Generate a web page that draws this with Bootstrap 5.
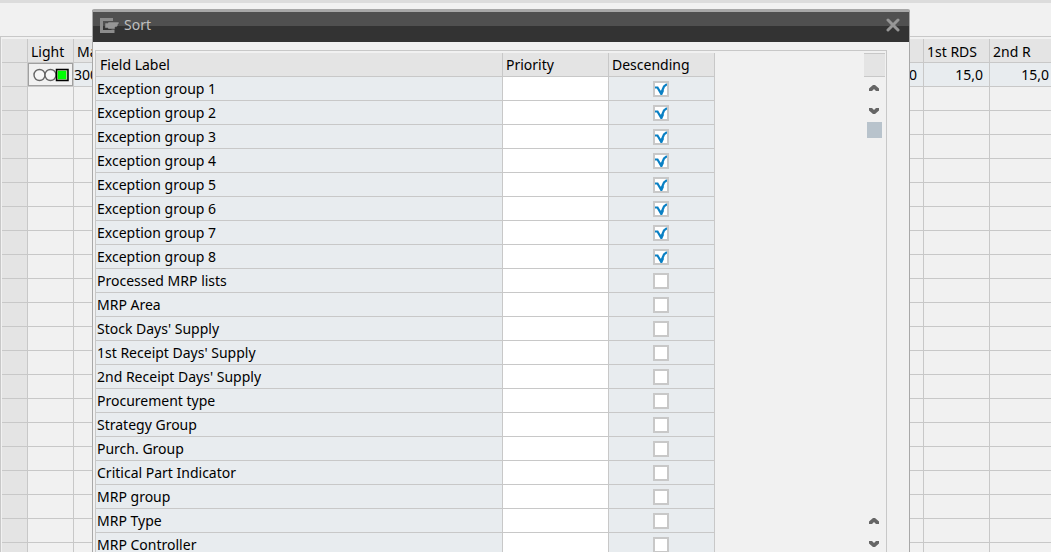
<!DOCTYPE html>
<html lang="en">
<head>
<meta charset="utf-8">
<meta name="viewport" content="width=device-width, initial-scale=1">
<title>Sort</title>
<link href="https://cdn.jsdelivr.net/npm/bootstrap@5.3.0/dist/css/bootstrap.min.css" rel="stylesheet">
<style>
  :root { --line: #c8c8c8; --head: #e4e4e4; --cell: #e8ecef; --page: #f1f1f1; }
  body { background: var(--page); color: #000; font: 14px/20px "Noto Sans", Tahoma, sans-serif; }
  .top-strip { height: 3px; background: #dcdcdc; }
  .result-list { margin-top: 33px; margin-right: -5px; padding-top: 2px; padding-left: 1px; border-top: 1px solid var(--line); border-left: 1px solid var(--line); }
  .sap-grid { table-layout: fixed; border-collapse: separate; border-spacing: 0; }
  .sap-grid th, .sap-grid td { height: 24px; padding: 0 2px; border: 0 solid var(--line); border-width: 0 1px 1px 0; font-weight: 400; white-space: nowrap; overflow: hidden; vertical-align: middle; }
  .sap-grid thead th { background: var(--head); padding: 2px 3px 0; }
  .sap-grid .current td { background: var(--cell); }
  .sap-grid tr td.row-handle { background: var(--head); }
  .w-handle { width: 26px; } .w-light { width: 46px; } .w-rds { width: 66px; }
  .result-list .num { padding-right: 6px; }
  .light-btn { display: flex; align-items: center; justify-content: center; width: 100%; height: 23px; padding: 0; background: var(--page); border: 1px solid #a0a0a0; }
  .sort-window { left: 92px; right: 141px; top: 9px; bottom: 0; background: var(--page); border: solid #a8a8a8; border-width: 3px 1px 0; border-radius: 2px 2px 0 0; }
  .title-bar { height: 30px; flex: none; padding: 0 9px 4px 7px; background: linear-gradient(#505050 14px, #333 14px); color: #c0c0c0; }
  .title-bar h1 { font-size: 14px; line-height: 20px; }
  .sort-panel { margin: 8px 22px 0 2px; border: solid var(--line); border-width: 1px 1px 0; padding: 2px 1px 0 0; }
  .sort-area td { background: var(--cell); }
  .sort-area td.entry { background: #fff; padding: 0; }
  .sort-area tbody th { background: var(--cell); padding: 0 1px; }
  .sort-area thead th { padding: 1px 4px 0; }
  .sort-area thead .tight { padding-left: 3px; }
  .sort-area td.desc-cell { padding: 0 3px 0 1px; }
  .w-label { width: 407px; } .w-entry { width: 106px; }
  .entry input { height: 23px; min-height: 0; border: 0; border-radius: 0; padding: 0 3px; font-size: 14px; }
  .desc-check.form-check-input { width: 16px; height: 16px; margin: 1px auto 0; border: 2px solid var(--line); border-radius: 0; background-color: #fff; float: none; display: block; }
  .desc-check.form-check-input:checked { background-color: #fff; border-color: var(--line); background-size: 12px 12px; background-image: url("data:image/svg+xml,%3Csvg xmlns='http://www.w3.org/2000/svg' viewBox='0 0 12 12'%3E%3Cpath d='M0 4.5H2.5L6 10.5L9 3.5L12 1M5 8.5H7.5L6 12' fill='none' stroke='%230a80c4' stroke-width='2.2'/%3E%3C/svg%3E"); }
  .scroll-rail { width: 21px; flex: none; }
  .rail-head { height: 24px; background: var(--head); border: solid var(--line); border-width: 1px 0; }
  .rail-btn { display: flex; align-items: center; justify-content: center; height: 23px; width: 100%; padding: 0 1px 2px 0; border: 0; background: none; }
  .rail-thumb { width: 15px; height: 16px; background: #b8c3cc; }
  .rail-track { height: 388px; margin-top: -1px; }
</style>
</head>
<body class="vh-100 overflow-hidden position-relative">
<div class="top-strip"></div>
<main class="result-list">
  <table class="sap-grid w-100" id="results">
    <colgroup><col class="w-handle"><col class="w-light"><col class="w-rds"><col><col class="w-rds"><col class="w-rds"></colgroup>
    <thead><tr><th></th><th>Light</th><th>Ma</th><th></th><th>1st RDS</th><th>2nd R</th></tr></thead>
    <tbody>
      <tr class="current"><td class="row-handle"></td>
        <td class="p-0"><button class="light-btn" type="button" aria-label="Green light">
          <svg width="36" height="14" viewBox="0 0 36 14"><g fill="#f6f6f6" stroke="#666" stroke-width="1.4"><circle cx="6.5" cy="7" r="5.5"/><circle cx="17.5" cy="7" r="5.5"/></g><path d="M23.5 1.5H35v11H23.5z" fill="#a8d890" stroke="#000" stroke-width="1.5"/><path d="M25 3h8v8h-8z" fill="#0f0"/></svg></button></td>
        <td class="px-0">300</td><td class="text-end num">0</td><td class="text-end num">15,0</td><td class="text-end num">15,0</td></tr>
    </tbody>
  </table>
</main>

<section class="sort-window position-absolute d-flex flex-column overflow-hidden" role="dialog" aria-labelledby="sortTitle">
  <header class="title-bar d-flex align-items-center">
    <svg width="20" height="15" viewBox="0 0 20 15" aria-hidden="true"><path d="M13 1.5H1.5v12H13v-2" fill="none" stroke="#8c8c8c" stroke-width="3"/><path d="M5 5h3V4h11v2h-1v2h-1v1h-2v2H8v-1H5z" fill="#969696" stroke="#444" stroke-width=".5"/></svg>
    <h1 class="mb-0 ms-1 fw-normal flex-grow-1" id="sortTitle">Sort</h1>
    <button class="btn p-0 border-0 d-flex" type="button" aria-label="Close"><svg width="14" height="14" viewBox="0 0 14 14"><path d="M2 2l10 10M12 2L2 12" stroke="#969696" stroke-width="3" stroke-linecap="round"/></svg></button>
  </header>
  <div class="sort-panel d-flex justify-content-between align-items-start">
    <div class="sort-area">
      <table class="sap-grid">
        <colgroup><col class="w-label"><col class="w-entry"><col class="w-entry"></colgroup>
        <thead><tr><th scope="col">Field Label</th><th scope="col" class="tight">Priority</th><th scope="col" class="tight">Descending</th></tr></thead>
        <tbody id="fields"></tbody>
      </table>
    </div>
    <div class="scroll-rail d-flex flex-column align-items-center">
      <div class="rail-head w-100"></div>
      <button class="rail-btn" type="button" aria-label="Top"><svg width="10" height="6" viewBox="0 0 10 6"><path d="M0 6V3.5L4 0h2l4 3.5V6H7L5 4 3 6z" fill="#666"/></svg></button>
      <button class="rail-btn" type="button" aria-label="Down"><svg width="10" height="6" viewBox="0 0 10 6"><path d="M0 0v2.5L4 6h2l4-3.5V0H7L5 2 3 0z" fill="#666"/></svg></button>
      <div class="rail-track"><div class="rail-thumb"></div></div>
      <button class="rail-btn" type="button" aria-label="Up"><svg width="10" height="6" viewBox="0 0 10 6"><path d="M0 6V3.5L4 0h2l4 3.5V6H7L5 4 3 6z" fill="#666"/></svg></button>
      <button class="rail-btn" type="button" aria-label="Bottom"><svg width="10" height="6" viewBox="0 0 10 6"><path d="M0 0v2.5L4 6h2l4-3.5V0H7L5 2 3 0z" fill="#666"/></svg></button>
    </div>
  </div>
</section>
<script src="https://cdn.jsdelivr.net/npm/bootstrap@5.3.0/dist/js/bootstrap.bundle.min.js"></script>
<script>
  const fields = [...Array.from({length: 8}, (_, i) => `Exception group ${i + 1}`),
    "Processed MRP lists", "MRP Area", "Stock Days' Supply", "1st Receipt Days' Supply", "2nd Receipt Days' Supply",
    "Procurement type", "Strategy Group", "Purch. Group", "Critical Part Indicator", "MRP group", "MRP Type", "MRP Controller"];
  document.getElementById("fields").innerHTML = fields.map((name, i) =>
    `<tr><th scope="row" id="f${i}">${name}</th><td class="entry"><input class="form-control" type="text" aria-labelledby="f${i}"></td>
     <td class="desc-cell"><input class="form-check-input desc-check" type="checkbox" aria-labelledby="f${i}"${i < 8 ? " checked" : ""}></td></tr>`).join("");
  // Empty rows below the single result
  document.querySelector("#results tbody").insertAdjacentHTML("beforeend",
    `<tr><td class="row-handle"></td>${"<td></td>".repeat(5)}</tr>`.repeat(20));
</script>
</body>
</html>
